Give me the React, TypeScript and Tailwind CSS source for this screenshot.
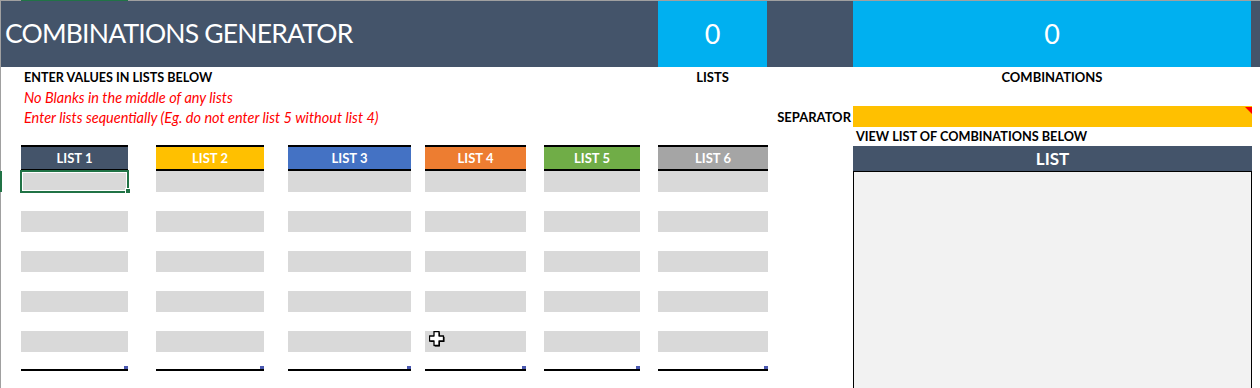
import React from 'react';

const lists = [
  { name: 'LIST 1', bg: 'bg-[#44546A]', w: 'w-[107px]', ml: 'ml-[20px]', selected: true },
  { name: 'LIST 2', bg: 'bg-[#FFC000]', w: 'w-[108px]', ml: 'ml-[28px]' },
  { name: 'LIST 3', bg: 'bg-[#4472C4]', w: 'w-[123px]', ml: 'ml-[24px]' },
  { name: 'LIST 4', bg: 'bg-[#ED7D31]', w: 'w-[101px]', ml: 'ml-[14px]' },
  { name: 'LIST 5', bg: 'bg-[#70AD47]', w: 'w-[96px]', ml: 'ml-[18px]' },
  { name: 'LIST 6', bg: 'bg-[#A5A5A5]', w: 'w-[110px]', ml: 'ml-[18px]' },
];

function CrossCursor() {
  const pts = '5,0.5 10,0.5 10,5 14.5,5 14.5,10 10,10 10,14.5 5,14.5 5,10 0.5,10 0.5,5 5,5';
  return (
    <svg width="17" height="17" viewBox="0 0 17 17" className="absolute left-[429px] top-[331px]">
      <polygon points={pts} transform="translate(1,1)" fill="#000" />
      <polygon points={pts} fill="#fff" stroke="#000" strokeWidth="1.3" strokeLinejoin="round" />
    </svg>
  );
}

function ListColumn({ name, bg, w, ml, selected }: { name: string; bg: string; w: string; ml: string; selected?: boolean }) {
  return (
    <div className={`${w} ${ml} flex flex-col shrink-0 relative`}>
      <div className={`${bg} h-[26px] shrink-0 border-y-2 border-black flex items-center justify-center pt-px text-white font-bold text-[13px]`}>
        {name}
      </div>
      <div className="flex flex-col gap-[19px]">
        {[0, 1, 2, 3, 4].map((i) => (
          <div key={i} className="h-[21px] shrink-0 bg-[#D9D9D9] relative">
            {selected && i === 0 && (
              <>
                <div className="absolute -inset-px border-2 border-[#217346]" />
                <div className="absolute inset-px border border-white" />
                <div className="absolute -right-[3px] -bottom-[2px] w-[6px] h-[6px] bg-[#217346] border border-white" />
              </>
            )}
          </div>
        ))}
      </div>
      <div className="mt-[17px] h-[2px] shrink-0 bg-black relative">
        <div className="absolute right-0 -top-[3px] w-[4px] h-[3px] bg-[#4A58B0]" />
      </div>
    </div>
  );
}

export default function App() {
  return (
    <div className="w-[1260px] h-[388px] bg-white overflow-hidden relative font-['Lato','Liberation_Sans',sans-serif]">
      {/* sheet edge */}
      <div className="h-px bg-[#A0A0A0] flex">
        <div className="ml-[21px] w-[107px] bg-[#217346]" />
      </div>
      <div className="flex flex-col border-l border-[#A0A0A0]">
        {/* title bar */}
        <div className="h-[66px] shrink-0 flex">
          <div className="w-[657px] bg-[#44546A] flex items-center pl-[4px] text-white text-[26.5px] tracking-[-0.8px]">
            COMBINATIONS GENERATOR
          </div>
          <div className="w-[109px] bg-[#00B0F0] flex items-center justify-center text-white text-[27px]">0</div>
          <div className="w-[86px] bg-[#44546A]" />
          <div className="w-[398px] bg-[#00B0F0] flex items-center justify-center text-white text-[27px]">0</div>
          <div className="flex-1 bg-[#44546A]" />
        </div>

        {/* labels */}
        <div className="h-[20px] shrink-0 flex items-center pt-[2px] text-[13px] font-bold text-black">
          <div className="w-[657px] pl-[23px] text-[12.6px]">ENTER VALUES IN LISTS BELOW</div>
          <div className="w-[109px] text-center">LISTS</div>
          <div className="w-[86px]" />
          <div className="w-[398px] text-center">COMBINATIONS</div>
        </div>
        <div className="h-[19px] shrink-0 flex items-center pt-[2px] pl-[23px] text-[14.5px] italic text-[#FF0000]">
          No Blanks in the middle of any lists
        </div>
        <div className="h-[21px] shrink-0 flex items-center">
          <div className="w-[767px] pl-[23px] pt-[2px] text-[14.5px] italic text-[#FF0000]">
            Enter lists sequentially (Eg. do not enter list 5 without list 4)
          </div>
          <div className="w-[85px] pr-[2px] pt-[2px] text-right text-[13px] font-bold text-black">SEPARATOR</div>
          <div className="w-[399px] h-full bg-[#FFC000] relative">
            <svg width="7" height="7" viewBox="0 0 7 7" className="absolute right-0 top-px">
              <polygon points="0,0 7,0 7,7" fill="#FF0000" />
            </svg>
          </div>
        </div>
        <div className="h-[18px] shrink-0 flex items-center pt-[2px] text-[12.7px] font-bold text-black">
          <div className="pl-[3px] ml-[852px] whitespace-nowrap">VIEW LIST OF COMBINATIONS BELOW</div>
        </div>

        {/* lists + output */}
        <div className="flex shrink-0">
          <div className="flex w-[767px]">
            {lists.map((l) => (
              <ListColumn key={l.name} {...l} />
            ))}
          </div>
          <div className="ml-[85px] w-[399px] flex flex-col mt-px">
            <div className="h-[25px] shrink-0 bg-[#44546A] flex items-center justify-center pt-px text-white font-bold text-[17px]">
              LIST
            </div>
            <div className="h-[230px] shrink-0 bg-[#F2F2F2] border border-black border-b-0" />
          </div>
        </div>
      </div>

      {/* selected row marker */}
      <div className="absolute left-0 top-[171px] w-[2px] h-[21px] bg-[#217346]" />
      <CrossCursor />
    </div>
  );
}
